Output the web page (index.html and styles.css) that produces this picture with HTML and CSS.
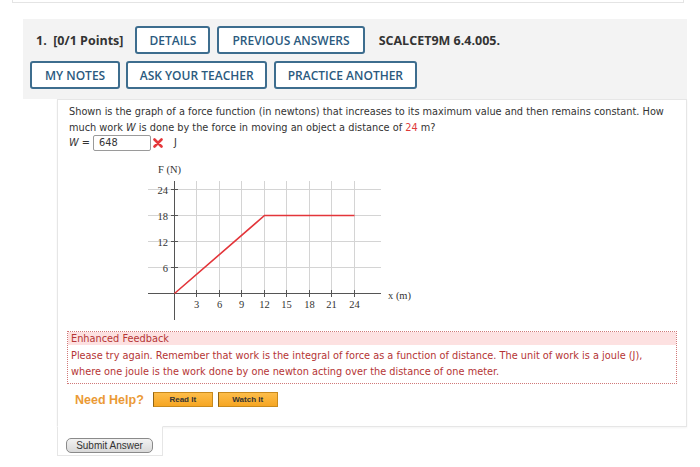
FILE: index.html
```html
<!DOCTYPE html>
<html>
<head>
<meta charset="utf-8">
<link rel="stylesheet" href="styles.css">
</head>
<body>
<div class="topcard"></div>
<div class="qhead">
  <div class="qrow">
    <span class="qnum">1.&nbsp; [0/1 Points]</span>
    <span class="btn b-details">DETAILS</span>
    <span class="btn b-prev">PREVIOUS ANSWERS</span>
    <span class="qcode">SCALCET9M 6.4.005.</span>
  </div>
  <div class="qrow row2">
    <span class="btn b-notes">MY NOTES</span>
    <span class="btn">ASK YOUR TEACHER</span>
    <span class="btn b-practice">PRACTICE ANOTHER</span>
  </div>
</div>
<div class="panel">
  <div class="qtext">
    <p class="line">Shown is the graph of a force function (in newtons) that increases to its maximum value and then remains constant. How much work <i>W</i> is done by the force in moving an object a distance of <span class="red">24</span> m?</p>
    <div class="answer">
      <span class="weq"><i>W</i> =</span>
      <span class="inbox">648</span>
      <svg class="xmark" width="10" height="10" viewBox="0 0 10 10"><path d="M1.5 1.5 L8.5 8.5 M8.5 1.5 L1.5 8.5" stroke="#e5383b" stroke-width="2.6" stroke-linecap="round"/></svg>
      <span class="unit">J</span>
    </div>
  </div>
  <svg class="graph" width="290" height="160" viewBox="0 0 290 160">
    <g stroke="#d4d4d4" stroke-width="1">
      <line x1="7" y1="29.5" x2="240" y2="29.5"/>
      <line x1="7" y1="55.5" x2="240" y2="55.5"/>
      <line x1="7" y1="81.5" x2="240" y2="81.5"/>
      <line x1="7" y1="107.5" x2="240" y2="107.5"/>
      <line x1="55.5" y1="21" x2="55.5" y2="133"/>
      <line x1="78.5" y1="21" x2="78.5" y2="133"/>
      <line x1="100.5" y1="21" x2="100.5" y2="133"/>
      <line x1="123.5" y1="21" x2="123.5" y2="133"/>
      <line x1="145.5" y1="21" x2="145.5" y2="133"/>
      <line x1="168.5" y1="21" x2="168.5" y2="133"/>
      <line x1="190.5" y1="21" x2="190.5" y2="133"/>
      <line x1="213.5" y1="21" x2="213.5" y2="133"/>
    </g>
    <g stroke="#555" stroke-width="1">
      <line x1="7" y1="133.5" x2="240" y2="133.5"/>
      <line x1="33.5" y1="21" x2="33.5" y2="160"/>
      <line x1="30" y1="29.5" x2="37" y2="29.5"/>
      <line x1="30" y1="55.5" x2="37" y2="55.5"/>
      <line x1="30" y1="81.5" x2="37" y2="81.5"/>
      <line x1="30" y1="107.5" x2="37" y2="107.5"/>
      <line x1="55.5" y1="130" x2="55.5" y2="137"/>
      <line x1="78.5" y1="130" x2="78.5" y2="137"/>
      <line x1="100.5" y1="130" x2="100.5" y2="137"/>
      <line x1="123.5" y1="130" x2="123.5" y2="137"/>
      <line x1="145.5" y1="130" x2="145.5" y2="137"/>
      <line x1="168.5" y1="130" x2="168.5" y2="137"/>
      <line x1="190.5" y1="130" x2="190.5" y2="137"/>
      <line x1="213.5" y1="130" x2="213.5" y2="137"/>
    </g>
    <polyline points="33.5,133.5 123.5,55.5 213.5,55.5" fill="none" stroke="#e3353a" stroke-width="1.6"/>
    <g class="glabel" text-anchor="end">
      <text x="27" y="33.5">24</text>
      <text x="27" y="59.5">18</text>
      <text x="27" y="85.5">12</text>
      <text x="27" y="111.5">6</text>
    </g>
    <g class="glabel" text-anchor="middle">
      <text x="55.5" y="148">3</text>
      <text x="78.5" y="148">6</text>
      <text x="100.5" y="148">9</text>
      <text x="123.5" y="148">12</text>
      <text x="145.5" y="148">15</text>
      <text x="168.5" y="148">18</text>
      <text x="190.5" y="148">21</text>
      <text x="213.5" y="148">24</text>
    </g>
    <text class="glabel" x="17" y="13">F (N)</text>
    <text class="glabel" x="247" y="139">x (m)</text>
  </svg>
  <div class="feedback">
    <div class="fbhead">Enhanced Feedback</div>
    <div class="fbbody">Please try again. Remember that work is the integral of force as a function of distance. The unit of work is a joule (J), where one joule is the work done by one newton acting over the distance of one meter.</div>
  </div>
  <div class="help">
    <span class="needhelp">Need Help?</span>
    <span class="hbtn">Read It</span>
    <span class="hbtn">Watch It</span>
  </div>
</div>
<div class="subtab">
  <span class="submit">Submit Answer</span>
</div>
</body>
</html>
```
FILE: styles.css
```css
html, body { margin: 0; padding: 0; background: #fff; }
body { width: 700px; height: 467px; overflow: hidden; }

.topcard {
  margin-left: 12px;
  width: 670px;
  height: 2px;
  border: 1px solid #e4e4e4;
  border-top: none;
  background: #fff;
}

.qhead {
  margin: 16px 0 0 23px;
  width: 664px;
  height: 80px;
  box-sizing: border-box;
  background: #f3f3f3;
  padding: 7px 0 0 7px;
  font-family: "Open Sans", sans-serif;
}
.qrow { display: flex; align-items: center; height: 28px; }
.row2 { margin-top: 7px; }
.qnum {
  font-weight: 700; font-size: 12.5px; color: #333;
  margin-left: 6px; margin-right: 12px;
}
.qcode { font-weight: 700; font-size: 12.5px; color: #333; margin-left: 14px; }
.btn {
  display: inline-flex; align-items: center; justify-content: center;
  height: 28px; box-sizing: border-box;
  padding: 0 11.5px;
  border: 2px solid #3d6d8e;
  border-radius: 3px;
  background: #fff;
  color: #2b5a7e;
  font-weight: 600; font-size: 12px;
}
.b-details { padding: 0 12px; }
.b-prev { padding: 0 13px; margin-left: 7px; }
.b-notes { padding: 0 13px; margin-right: 6px; }
.b-practice { margin-left: 7px; }

.panel {
  margin-left: 57px;
  width: 630px;
  box-sizing: border-box;
  border: 1px solid #e6e6e6;
  background: #fff;
  padding: 4px 11px 19px 9px;
  box-shadow: 0 1px 2px rgba(0,0,0,0.05);
}
.qtext {
  padding-left: 2px;
  font-family: "DejaVu Sans", Verdana, sans-serif;
  font-size: 9.78px;
  line-height: 15.5px;
  color: #333;
}
.line { margin: 0; }
.red { color: #e03a3a; }
.answer { display: flex; align-items: center; height: 16px; margin-top: 0; }
.weq { margin-right: 3px; }
.inbox {
  width: 58px; height: 16px; box-sizing: border-box;
  border: 1px solid #9a9a9a; border-radius: 2px;
  padding-left: 5px; line-height: 14px;
  background: #fff;
}
.xmark { margin-left: 2px; }
.unit { margin-left: 11px; }

.graph { display: block; margin: 9px 0 0 74px; }
.glabel {
  font-family: "Liberation Serif", "Times New Roman", serif;
  font-size: 10.5px; fill: #333;
}

.feedback {
  margin-top: 11px;
  width: 610px; box-sizing: border-box;
  border: 1px dotted #d07878;
  font-family: "DejaVu Sans", Verdana, sans-serif;
  font-size: 9.78px;
  color: #b53535;
}
.fbhead {
  background: #fde1e1;
  height: 13px; line-height: 13px;
  padding-left: 3px;
}
.fbbody { padding: 3px 3px 3px 3px; line-height: 16px; }

.help { display: flex; align-items: center; height: 15px; margin-top: 8px; padding-left: 8px; }
.needhelp {
  font-family: "Liberation Sans", Arial, sans-serif;
  font-weight: 700; font-size: 12.5px; color: #eb9a35;
  margin-right: 9px;
}
.hbtn {
  display: inline-flex; align-items: center; justify-content: center;
  width: 60px; height: 15px; box-sizing: border-box;
  background: linear-gradient(#fdbd4a, #f6a623);
  border: 1px solid #c98a1c;
  border-left-color: #8d6417;
  font-family: "Liberation Sans", Arial, sans-serif;
  font-weight: 700; font-size: 8px; color: #333;
  margin-right: 5px;
}

.subtab {
  margin: -1px 0 0 57px;
  width: 106px; height: 30px; box-sizing: border-box;
  border: 1px solid #e6e6e6; border-top: 1px solid #fff;
  background: #fff;
  padding: 8px 0 0 8px;
}
.submit {
  display: inline-flex; align-items: center; justify-content: center;
  width: 87px; height: 15px; box-sizing: border-box;
  border: 1px solid #8a8a8a; border-radius: 5px;
  background: linear-gradient(#f2f2f2, #d9d9d9);
  font-family: "Liberation Sans", Arial, sans-serif;
  font-size: 10px; color: #333;
}
```
